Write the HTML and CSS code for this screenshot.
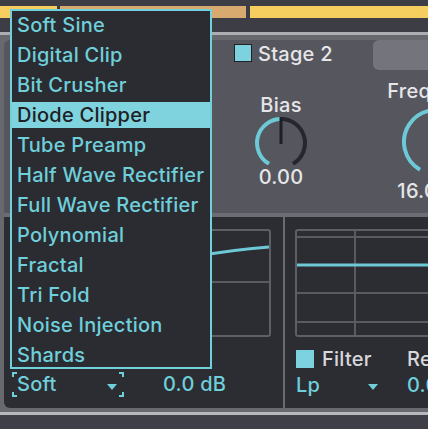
FILE: index.html
```html
<!DOCTYPE html>
<html lang="en">
<head>
<meta charset="utf-8">
<title>Stage 2</title>
<link rel="stylesheet" href="styles.css">
</head>
<body>
<div class="screen">
  <div class="topbar">
    <div class="clips">
      <span class="clip yellow first"></span>
      <span class="clip tan"></span>
      <span class="clip yellow last"></span>
    </div>
  </div>
  <div class="rule"></div>
  <div class="device">
    <div class="panel">
      <section class="upper">
        <div class="tabs">
          <div class="tab-active"><span class="check dark-edge"></span><span class="tab-label">Stage 2</span></div>
          <div class="tab-inactive"></div>
        </div>
        <div class="knobs">
          <div class="knob bias">
            <span class="knob-label">Bias</span>
            <svg class="dial" width="56" height="50" viewBox="0 0 56 50">
              <path d="M16 48.78 A24 24 0 0 1 28 4" fill="none" stroke="#6cc9d5" stroke-width="4"/>
              <path d="M28 4 A24 24 0 0 1 40 48.78" fill="none" stroke="#26272c" stroke-width="4"/>
              <line x1="28" y1="2" x2="28" y2="29" stroke="#1f2024" stroke-width="3"/>
            </svg>
            <span class="knob-value">0.00</span>
          </div>
          <div class="knob freq">
            <span class="knob-label">Frequency</span>
            <svg class="dial" width="72" height="68" viewBox="0 0 72 68">
              <path d="M20 63.71 A32 32 0 1 1 60.51 56.57" fill="none" stroke="#6cc9d5" stroke-width="4"/>
              <path d="M60.51 56.57 A32 32 0 0 1 52 63.71" fill="none" stroke="#26272c" stroke-width="4"/>
              <line x1="36" y1="36" x2="60" y2="56" stroke="#1f2024" stroke-width="3"/>
            </svg>
            <span class="knob-value">16.0 kHz</span>
          </div>
        </div>
      </section>
      <div class="hsep"></div>
      <section class="lower">
        <div class="shaper">
          <div class="graph shaper-graph">
            <svg width="251" height="104" viewBox="0 0 251 104">
              <line x1="0" y1="51" x2="251" y2="51" stroke="#5a5b61" stroke-width="2"/>
              <path d="M0 98 C 70 48 150 24 251 16" fill="none" stroke="#6cc9d5" stroke-width="3"/>
            </svg>
          </div>
          <div class="ctrl-row">
            <div class="select focus"><span>Soft</span>
              <svg class="tri" width="10" height="6" viewBox="0 0 10 6"><path d="M0 0H10L5 6Z" fill="#6fcfdb"/></svg>
            </div>
            <span class="value">0.0 dB</span>
          </div>
        </div>
        <div class="vsep"></div>
        <div class="filter">
          <div class="graph filter-graph">
            <svg width="160" height="104" viewBox="0 0 160 104">
              <line x1="0" y1="6" x2="160" y2="6" stroke="#5a5b61" stroke-width="2"/>
              <line x1="0" y1="62" x2="160" y2="62" stroke="#5a5b61" stroke-width="2"/>
              <line x1="0" y1="91" x2="160" y2="91" stroke="#5a5b61" stroke-width="2"/>
              <line x1="58" y1="0" x2="58" y2="104" stroke="#5a5b61" stroke-width="2"/>
              <line x1="0" y1="34" x2="160" y2="34" stroke="#6cc9d5" stroke-width="3"/>
            </svg>
          </div>
          <div class="fctrls">
            <div class="fcol type">
              <div class="frow"><span class="check"></span><span class="flabel">Filter</span></div>
              <div class="frow lp"><span class="value">Lp</span>
                <svg class="tri" width="10" height="6" viewBox="0 0 10 6"><path d="M0 0H10L5 6Z" fill="#6fcfdb"/></svg>
              </div>
            </div>
            <div class="fcol res">
              <div class="frow"><span class="flabel">Res</span></div>
              <div class="frow"><span class="value">0.00</span></div>
            </div>
          </div>
        </div>
      </section>
    </div>
  </div>
  <div class="rule light"></div>
  <div class="footer"></div>

  <ul class="menu">
    <li>Soft Sine</li>
    <li>Digital Clip</li>
    <li>Bit Crusher</li>
    <li class="sel">Diode Clipper</li>
    <li>Tube Preamp</li>
    <li>Half Wave Rectifier</li>
    <li>Full Wave Rectifier</li>
    <li>Polynomial</li>
    <li>Fractal</li>
    <li>Tri Fold</li>
    <li>Noise Injection</li>
    <li>Shards</li>
  </ul>
</div>
</body>
</html>
```

FILE: styles.css
```css
html, body {
  margin: 0;
  padding: 0;
  background: #3f4047;
}
body {
  width: 428px;
  height: 429px;
  overflow: hidden;
  font-family: Inter, "Noto Sans", "DejaVu Sans", sans-serif;
  font-weight: 500;
  font-size: 20px;
  letter-spacing: 0.25px;
}
.screen {
  position: relative;
  width: 428px;
  height: 429px;
  overflow: hidden;
}

/* top arrangement strip */
.topbar {
  height: 32px;
  background: #3d3e45;
  padding-top: 6px;
  box-sizing: border-box;
}
.clips {
  display: flex;
  height: 12px;
}
.clip { display: block; height: 12px; }
.clip.yellow { background: #f6cd5f; }
.clip.tan { background: #d8aa70; width: 186px; margin-left: 3px; }
.clip.first { width: 57px; }
.clip.last { flex: 1; margin-left: 4px; }

.rule { height: 3px; background: #acadb2; }
.rule.light { background: #b7b8bd; }
.footer { height: 14px; background: #3f4047; }

/* device */
.device {
  background: #68696f;
  padding: 5px 0 4px 4px;
}
.panel {
  height: 368px;
  border-radius: 6px 0 0 6px;
  overflow: hidden;
  display: flex;
  flex-direction: column;
}
.upper {
  height: 173px;
  background: #55565e;
  color: #e6e6e8;
}
.tabs {
  display: flex;
  height: 30px;
}
.tab-active {
  width: 369px;
  flex: 0 0 auto;
  display: flex;
  align-items: flex-start;
  padding: 3px 0 0 230px;
  box-sizing: border-box;
}
.tab-inactive {
  flex: 1;
  background: #74757c;
  border-radius: 6px 0 0 6px;
}
.check {
  width: 18px;
  height: 18px;
  background: #7cd2de;
  box-sizing: border-box;
  flex: 0 0 auto;
}
.check.dark-edge {
  border: 1px solid #222327;
  margin-top: 1px;
}
.tab-label {
  margin-left: 6px;
  line-height: 22px;
  white-space: nowrap;
}

.knobs {
  display: flex;
  padding-left: 247px;
  gap: 73px;
}
.knob {
  display: flex;
  flex-direction: column;
  align-items: center;
  flex: 0 0 auto;
  white-space: nowrap;
}
.knob-label, .knob-value { line-height: 22px; display: block; }
.knob.bias { width: 60px; margin-top: 24px; }
.knob.bias .dial { margin-top: -1px; }
.knob.bias .knob-value { margin-top: 1px; }
.knob.freq { width: 110px; margin-top: 10px; }
.knob.freq .dial { margin-top: 4px; margin-left: -6px; }
.knob.freq .knob-value { margin-top: 6px; }
.dial { display: block; }

.hsep { height: 4px; background: #6c6d73; }

.lower {
  height: 191px;
  background: #2c2d32;
  display: flex;
}
.shaper {
  width: 279px;
  flex: 0 0 auto;
  padding-top: 12px;
  box-sizing: border-box;
}
.vsep {
  width: 2px;
  background: #6a6b71;
  flex: 0 0 auto;
}
.filter {
  flex: 1;
  padding-top: 12px;
  overflow: hidden;
}
.graph {
  height: 108px;
  border: 2px solid #5e5f65;
  border-radius: 3px;
  box-sizing: border-box;
  overflow: hidden;
}
.graph svg { display: block; }
.shaper-graph { margin-left: 12px; width: 255px; }
.filter-graph { margin-left: 10px; width: 170px; }

.ctrl-row {
  display: flex;
  align-items: flex-start;
  margin-top: 35px;
}
.value {
  color: #6fcfdb;
  line-height: 25px;
  white-space: nowrap;
}
.ctrl-row .value { margin-left: 39px; }
.select {
  display: flex;
  justify-content: space-between;
  align-items: flex-start;
  color: #6fcfdb;
  line-height: 25px;
}
.focus {
  margin-left: 8px;
  width: 112px;
  height: 25px;
  padding: 0 7px 0 5px;
  box-sizing: border-box;
  background:
    linear-gradient(#6fcfdb, #6fcfdb) left top / 5px 2px no-repeat,
    linear-gradient(#6fcfdb, #6fcfdb) left top / 2px 5px no-repeat,
    linear-gradient(#6fcfdb, #6fcfdb) right top / 5px 2px no-repeat,
    linear-gradient(#6fcfdb, #6fcfdb) right top / 2px 5px no-repeat,
    linear-gradient(#6fcfdb, #6fcfdb) left bottom / 5px 2px no-repeat,
    linear-gradient(#6fcfdb, #6fcfdb) left bottom / 2px 5px no-repeat,
    linear-gradient(#6fcfdb, #6fcfdb) right bottom / 5px 2px no-repeat,
    linear-gradient(#6fcfdb, #6fcfdb) right bottom / 2px 5px no-repeat;
}
.tri { display: block; flex: 0 0 auto; }
.focus .tri { margin-top: 12px; }

.fctrls {
  display: flex;
  margin: 11px 0 0 11px;
}
.fcol { flex: 0 0 auto; }
.fcol.type { width: 82px; margin-right: 29px; }
.frow {
  display: flex;
  align-items: center;
  height: 22px;
  white-space: nowrap;
}
.frow + .frow { margin-top: 4px; }
.frow .value { line-height: 22px; }
.frow.lp { justify-content: space-between; align-items: flex-start; }
.frow.lp .tri { margin-top: 10px; }
.flabel {
  color: #d8d8dc;
  line-height: 22px;
}
.frow .check + .flabel { margin-left: 8px; }

/* overlay dropdown menu */
.menu {
  position: absolute;
  left: 10px;
  top: 9px;
  width: 202px;
  height: 360px;
  box-sizing: border-box;
  margin: 0;
  padding: 1px 0 0 0;
  list-style: none;
  background: #2b2c31;
  border: 2px solid #70d0dc;
  overflow: hidden;
}
.menu li {
  height: 26px;
  line-height: 26px;
  margin-bottom: 4px;
  padding-left: 5px;
  color: #6fcfdb;
  white-space: nowrap;
}
.menu li.sel {
  background: #7fd3de;
  color: #1e2024;
}
```
